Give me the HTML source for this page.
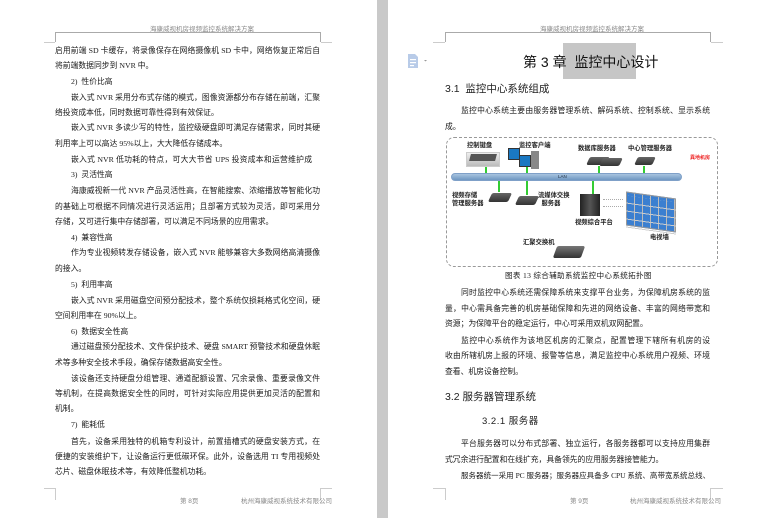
<!DOCTYPE html>
<html><head><meta charset="utf-8">
<style>
*{margin:0;padding:0;box-sizing:border-box}
body{width:760px;height:518px;background:#fff;position:relative;overflow:hidden;font-family:"Liberation Serif","Noto Sans CJK SC",serif;color:#1a1a1a}
.l{position:absolute;font-size:7.8px;line-height:12px;white-space:nowrap;height:12px}
.f{text-align:justify;text-align-last:justify;white-space:normal;overflow:hidden}
.hd{position:absolute;font-size:6.5px;color:#888;font-family:"Liberation Sans","Noto Sans CJK SC",sans-serif;white-space:nowrap}
.ln{position:absolute;background:#aaa}
.lb{position:absolute;font-family:"Liberation Sans","Noto Sans CJK SC",sans-serif;font-size:6.3px;font-weight:bold;color:#222;white-space:nowrap;line-height:8px}
.sv{position:absolute;background:linear-gradient(#666,#333);border-radius:2px;transform:skewX(-25deg)}
.g{position:absolute;background:#3c3;width:1.5px}
</style></head><body>
<div style="position:absolute;left:377px;top:0;width:11px;height:518px;background:#c9c9c9"></div>

<div class="hd" style="left:150px;top:23px">海康威视机房视频监控系统解决方案</div>
<div class="ln" style="left:55px;top:32px;width:266px;height:1px"></div>
<div class="ln" style="left:55px;top:32px;width:1px;height:10px"></div>
<div class="ln" style="left:320px;top:32px;width:1px;height:10px"></div>
<div class="ln" style="left:44px;top:42px;width:11px;height:1px;background:#ccc"></div>
<div class="ln" style="left:321px;top:42px;width:11px;height:1px;background:#ccc"></div>
<div class="ln" style="left:44px;top:488px;width:11px;height:1px;background:#ccc"></div>
<div class="ln" style="left:321px;top:488px;width:11px;height:1px;background:#ccc"></div>
<div class="ln" style="left:55px;top:488px;width:1px;height:12px;background:#ccc"></div>
<div class="ln" style="left:320px;top:488px;width:1px;height:12px;background:#ccc"></div>
<div class="hd" style="left:180px;top:495px">第 8页</div>
<div class="hd" style="left:241px;top:495px">杭州海康威视系统技术有限公司</div>

<div class="l f" style="left:55px;top:45px;width:265px">启用前端 SD 卡缓存，将录像保存在网络摄像机 SD 卡中，网络恢复正常后自动</div>
<div class="l" style="left:55px;top:60px">将前端数据同步到 NVR 中。</div>
<div class="l" style="left:71px;top:76px">2)&nbsp; 性价比高</div>
<div class="l f" style="left:71px;top:92px;width:249px">嵌入式 NVR 采用分布式存储的模式，图像资源都分布存储在前端，汇聚网</div>
<div class="l" style="left:55px;top:107px">络投资成本低，同时数据可靠性得到有效保证。</div>
<div class="l f" style="left:71px;top:122px;width:249px">嵌入式 NVR 多读少写的特性，监控级硬盘即可满足存储需求，同时其硬盘</div>
<div class="l" style="left:55px;top:138px">利用率上可以高达 95%以上，大大降低存储成本。</div>
<div class="l f" style="left:71px;top:154px;width:241px">嵌入式 NVR 低功耗的特点，可大大节省 UPS 投资成本和运营维护成本。</div>
<div class="l" style="left:71px;top:169px">3)&nbsp; 灵活性高</div>
<div class="l f" style="left:71px;top:185px;width:249px">海康威视新一代 NVR 产品灵活性高，在智能搜索、浓缩播放等智能化功能</div>
<div class="l f" style="left:55px;top:201px;width:265px">的基础上可根据不同情况进行灵活运用；且部署方式较为灵活，即可采用分布式</div>
<div class="l" style="left:55px;top:216px">存储，又可进行集中存储部署，可以满足不同场景的应用需求。</div>
<div class="l" style="left:71px;top:232px">4)&nbsp; 兼容性高</div>
<div class="l f" style="left:71px;top:247px;width:249px">作为专业视频转发存储设备，嵌入式 NVR 能够兼容大多数网络高清摄像机</div>
<div class="l" style="left:55px;top:263px">的接入。</div>
<div class="l" style="left:71px;top:279px">5)&nbsp; 利用率高</div>
<div class="l f" style="left:71px;top:295px;width:249px">嵌入式 NVR 采用磁盘空间预分配技术，整个系统仅损耗格式化空间，硬盘</div>
<div class="l" style="left:55px;top:310px">空间利用率在 90%以上。</div>
<div class="l" style="left:71px;top:326px">6)&nbsp; 数据安全性高</div>
<div class="l f" style="left:71px;top:341px;width:249px">通过磁盘预分配技术、文件保护技术、硬盘 SMART 预警技术和硬盘休眠技</div>
<div class="l" style="left:55px;top:357px">术等多种安全技术手段，确保存储数据高安全性。</div>
<div class="l f" style="left:71px;top:373px;width:249px">该设备还支持硬盘分组管理、通道配额设置、冗余录像、重要录像文件保护</div>
<div class="l f" style="left:55px;top:388px;width:265px">等机制，在提高数据安全性的同时，可针对实际应用提供更加灵活的配置和管理</div>
<div class="l" style="left:55px;top:403px">机制。</div>
<div class="l" style="left:71px;top:419px">7)&nbsp; 能耗低</div>
<div class="l f" style="left:71px;top:436px;width:249px">首先，设备采用独特的机箱专利设计，前置插槽式的硬盘安装方式，在保证</div>
<div class="l f" style="left:55px;top:451px;width:265px">便捷的安装维护下，让设备运行更低碳环保。此外，设备选用 TI 专用视频处理</div>
<div class="l" style="left:55px;top:466px">芯片、磁盘休眠技术等，有效降低整机功耗。</div>

<div class="hd" style="left:540px;top:23px">海康威视机房视频监控系统解决方案</div>
<div class="ln" style="left:445px;top:32px;width:266px;height:1px"></div>
<div class="ln" style="left:445px;top:32px;width:1px;height:10px"></div>
<div class="ln" style="left:710px;top:32px;width:1px;height:10px"></div>
<div class="ln" style="left:433px;top:42px;width:12px;height:1px;background:#ccc"></div>
<div class="ln" style="left:711px;top:42px;width:12px;height:1px;background:#ccc"></div>
<div class="ln" style="left:433px;top:488px;width:12px;height:1px;background:#ccc"></div>
<div class="ln" style="left:711px;top:488px;width:12px;height:1px;background:#ccc"></div>
<div class="ln" style="left:445px;top:488px;width:1px;height:12px;background:#ccc"></div>
<div class="ln" style="left:710px;top:488px;width:1px;height:12px;background:#ccc"></div>
<div class="hd" style="left:570px;top:495px">第 9页</div>
<div class="hd" style="left:630px;top:495px">杭州海康威视系统技术有限公司</div>

<svg style="position:absolute;left:407px;top:54px" width="22" height="14" viewBox="0 0 22 14">
<path d="M1 0h7l3 3v11H1z" fill="#b8cbe8"/><rect x="3" y="5" width="6" height="1.2" fill="#fff"/><rect x="3" y="8" width="6" height="1.2" fill="#fff"/><rect x="3" y="11" width="4" height="1.2" fill="#fff"/>
<path d="M17 6h3l-1.5 1.5z" fill="#999"/></svg>

<div style="position:absolute;left:563px;top:43px;width:73px;height:36px;background:#c6c6c6"></div>
<div style="position:absolute;left:523px;top:53px;font-family:'Liberation Sans','Noto Sans CJK SC',sans-serif;font-size:14px;line-height:18px;white-space:nowrap;color:#111">第 3 章&nbsp; 监控中心设计</div>
<div style="position:absolute;left:445px;top:82px;font-family:'Liberation Sans','Noto Sans CJK SC',sans-serif;font-size:10.5px;line-height:14px;white-space:nowrap;color:#222">3.1&nbsp; 监控中心系统组成</div>

<div class="l f" style="left:461px;top:105px;width:249px">监控中心系统主要由服务器管理系统、解码系统、控制系统、显示系统等组</div>
<div class="l" style="left:445px;top:121px">成。</div>

<div style="position:absolute;left:446px;top:137px;width:272px;height:130px;border:1.3px dashed #999;border-radius:8px"></div>
<div class="lb" style="left:467px;top:142px">控制键盘</div>
<div style="position:absolute;left:466px;top:152px;width:34px;height:15px;background:linear-gradient(#eee,#bbb);border:1px solid #ccc"></div>
<div style="position:absolute;left:470px;top:154px;width:26px;height:7px;background:#555;transform:skewX(-15deg)"></div>
<div class="lb" style="left:519px;top:142px">监控客户端</div>
<div style="position:absolute;left:508px;top:148px;width:12px;height:12px;background:#1a78c2;border:1px solid #333"></div>
<div style="position:absolute;left:519px;top:155px;width:12px;height:12px;background:#1a78c2;border:1px solid #333"></div>
<div style="position:absolute;left:531px;top:151px;width:8px;height:18px;background:#888"></div>
<div class="lb" style="left:578px;top:145px">数据库服务器</div>
<div class="sv" style="left:588px;top:157px;width:20px;height:8px"></div>
<div class="sv" style="left:601px;top:158px;width:20px;height:8px"></div>
<div class="lb" style="left:628px;top:145px">中心管理服务器</div>
<div class="sv" style="left:636px;top:157px;width:18px;height:8px"></div>
<div style="position:absolute;left:690px;top:154px;font-size:5px;color:#e22;font-family:'Liberation Sans','Noto Sans CJK SC',sans-serif;font-weight:bold">異地机房</div>
<div class="g" style="left:485px;top:167px;height:6px"></div>
<div class="g" style="left:526px;top:167px;height:6px"></div>
<div class="g" style="left:598px;top:166px;height:7px"></div>
<div class="g" style="left:643px;top:166px;height:7px"></div>
<div style="position:absolute;left:451px;top:173px;width:231px;height:8px;border-radius:4px;background:linear-gradient(#a8c4e0,#6f97c2);border:1px solid #7fa0c8"></div>
<div style="position:absolute;left:558px;top:174px;font-size:4.5px;color:#234;font-family:'Liberation Sans',sans-serif">LAN</div>
<div class="g" style="left:498px;top:181px;height:11px"></div>
<div class="g" style="left:526px;top:181px;height:14px"></div>
<div class="g" style="left:592px;top:181px;height:14px"></div>
<div class="lb" style="left:452px;top:192px">视频存储<br>管理服务器</div>
<div class="sv" style="left:490px;top:193px;width:20px;height:9px"></div>
<div class="sv" style="left:517px;top:196px;width:20px;height:9px"></div>
<div class="lb" style="left:538px;top:192px">流媒体交换<br>&nbsp;&nbsp;服务器</div>
<div style="position:absolute;left:580px;top:194px;width:20px;height:22px;background:linear-gradient(90deg,#222,#555,#222)"></div>
<div style="position:absolute;left:603px;top:199px;width:20px;height:8px;border-top:1px dotted #aaa;border-bottom:1px dotted #aaa"></div>
<div class="lb" style="left:575px;top:219px">视频综合平台</div>
<div style="position:absolute;left:626px;top:195px;width:50px;height:34px;background:repeating-linear-gradient(90deg,#3b7fd0 0 7px,#bbb 7px 8px),#3b7fd0;transform:skewY(8deg);border:1px solid #999"></div>
<div style="position:absolute;left:626px;top:199px;width:50px;height:34px;background:repeating-linear-gradient(#0000 0 7px,#ccc 7px 8px);transform:skewY(8deg)"></div>
<div class="lb" style="left:650px;top:234px">电视墙</div>
<div class="lb" style="left:523px;top:239px">汇聚交换机</div>
<div style="position:absolute;left:555px;top:246px;width:28px;height:12px;background:linear-gradient(#777,#333);transform:skewX(-20deg);border-radius:2px"></div>

<div class="l" style="left:505px;top:270px;font-size:7.6px;letter-spacing:.3px">图表 13 综合辅助系统监控中心系统拓扑图</div>

<div class="l f" style="left:461px;top:287px;width:249px">同时监控中心系统还需保障系统来支撑平台业务，为保障机房系统的监控质</div>
<div class="l f" style="left:445px;top:303px;width:265px">量，中心需具备完善的机房基础保障和先进的网络设备、丰富的网络带宽和光纤</div>
<div class="l" style="left:445px;top:318px">资源；为保障平台的稳定运行，中心可采用双机双网配置。</div>
<div class="l f" style="left:461px;top:335px;width:249px">监控中心系统作为该地区机房的汇聚点，配置管理下辖所有机房的设备，接</div>
<div class="l f" style="left:445px;top:350px;width:265px">收由所辖机房上报的环境、报警等信息，满足监控中心系统用户视频、环境信息</div>
<div class="l" style="left:445px;top:366px">查看、机房设备控制。</div>
<div style="position:absolute;left:445px;top:390px;font-family:'Liberation Sans','Noto Sans CJK SC',sans-serif;font-size:10.5px;line-height:14px;white-space:nowrap;color:#222">3.2 服务器管理系统</div>
<div style="position:absolute;left:482px;top:415px;font-family:'Liberation Sans','Noto Sans CJK SC',sans-serif;font-size:9.5px;line-height:13px;white-space:nowrap;color:#222;letter-spacing:.5px">3.2.1 服务器</div>
<div class="l f" style="left:461px;top:438px;width:249px">平台服务器可以分布式部署、独立运行，各服务器都可以支持应用集群的方</div>
<div class="l" style="left:445px;top:454px">式冗余进行配置和在线扩充，具备领先的应用服务器接管能力。</div>
<div class="l f" style="left:461px;top:470px;width:249px;font-size:7.5px;letter-spacing:-.1px">服务器统一采用 PC 服务器；服务器应具备多 CPU 系统、高带宽系统总线、</div>
</body></html>
